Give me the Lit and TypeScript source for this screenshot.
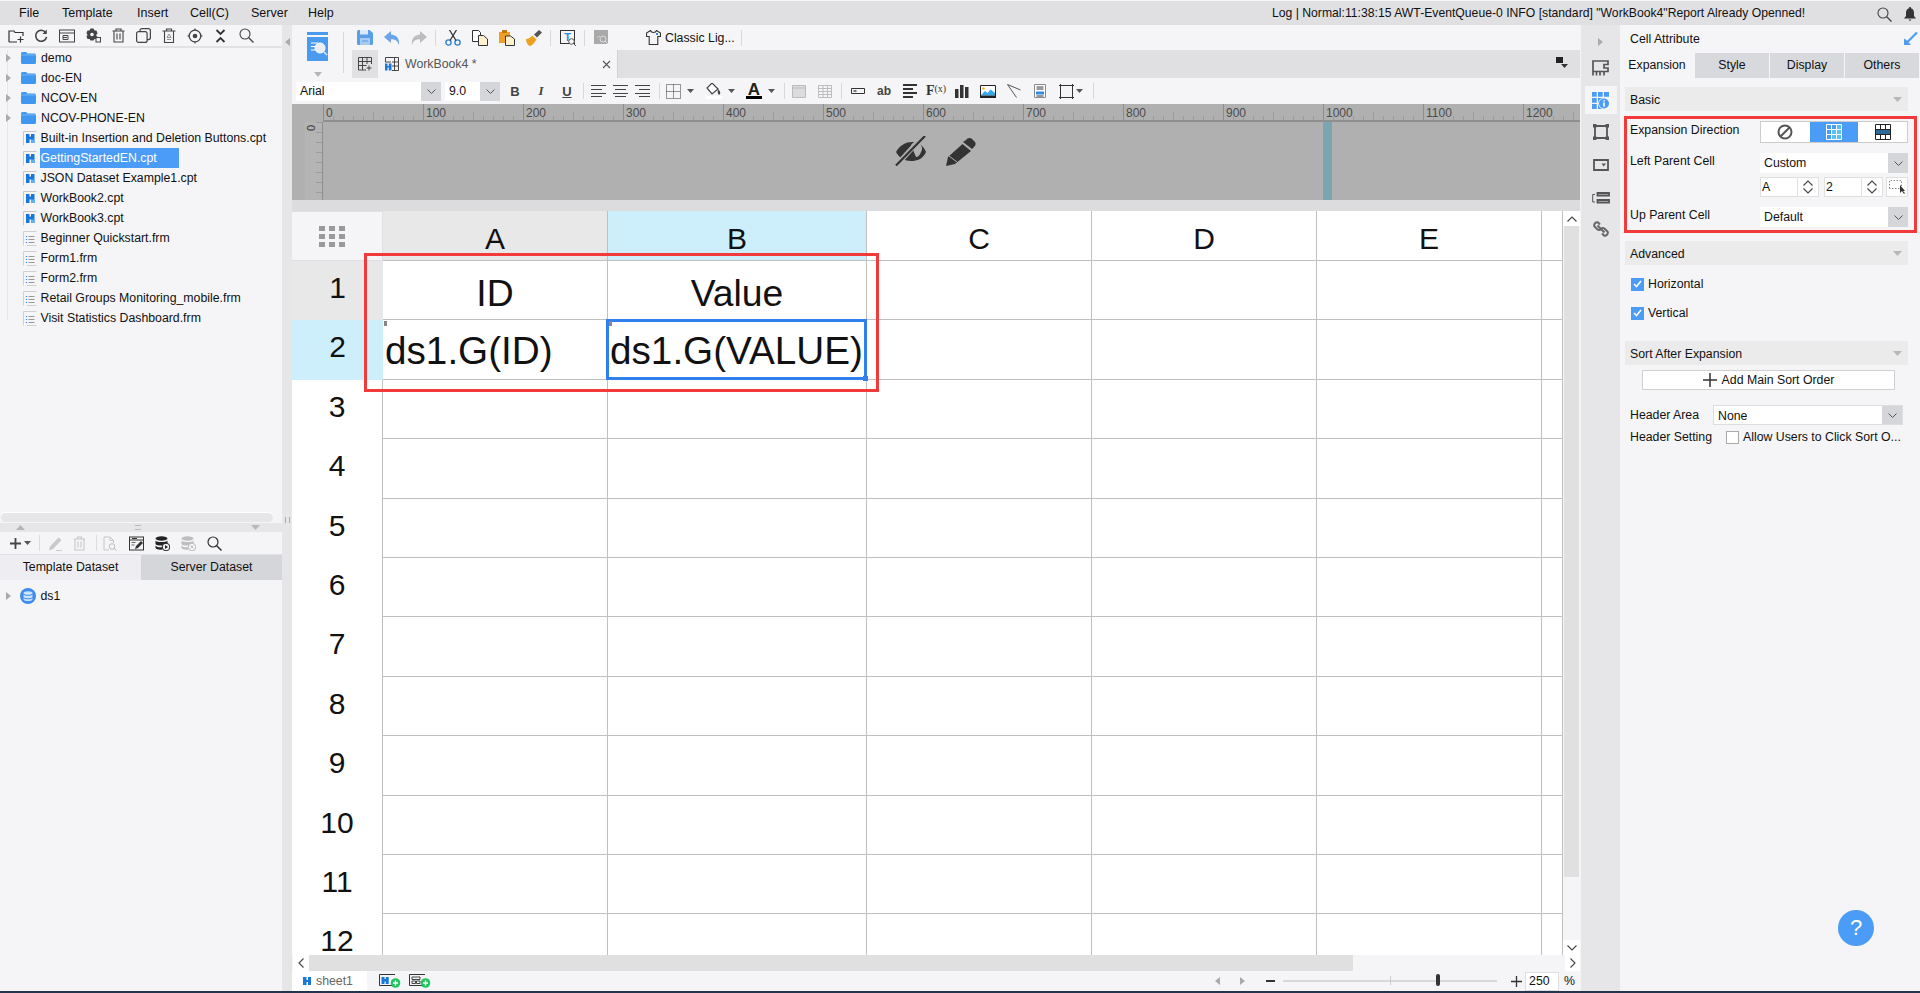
import { LitElement, html, css, svg } from "lit";
import { customElement } from "lit/decorators.js";

const S = (w: number, h: number, body: any) =>
  html`<svg width=${w} height=${h} viewBox="0 0 ${w} ${h}" fill="none" xmlns="http://www.w3.org/2000/svg">${body}</svg>`;

const BL = "#4b9cf7";

const ic: Record<string, any> = {
  newFolder: S(16, 14, svg`<path d="M1 13V2h5l1 1.500h8V7M1 13h8" stroke="#333" stroke-width="1.200"/><path d="M12.500 7.500v6M9.500 10.500h6" stroke="#333" stroke-width="1.200"/>`),
  refresh: S(14, 14, svg`<path d="M11.600 3.400A5.500 5.500 0 1 0 12.600 8" stroke="#444" stroke-width="1.600"/><path d="M12.800 .5v4.500H8.500z" fill="#444"/>`),
  panel: S(16, 14, svg`<rect x=".5" y="1" width="15" height="12" stroke="#444"/><path d="M.5 4h15M4 6.500h5v4H4zM4 8.500h4" stroke="#444"/>`),
  gear: S(16, 15, svg`<path d="M2.500 2.500h2l1-2h3l1 2h2l1 3-1.500 1.500 1.500 2-1 2h-2l-1 1.500h-3l-1-1.500h-2l-1-2.500 1-1.500-1-2z" fill="#444"/><circle cx="7" cy="6.500" r="1.800" fill="#f5f5f7"/><rect x="11" y="9.500" width="4.500" height="4.500" fill="#f5f5f7" stroke="#444"/>`),
  trash: S(13, 15, svg`<path d="M.5 3h12M4 3V1h5v2M2 3v11h9V3M5 5.500v6M8 5.500v6" stroke="#444" stroke-width="1.100"/>`),
  copyBox: S(15, 15, svg`<rect x=".6" y="3.600" width="10.500" height="10.800" rx="2" stroke="#444" stroke-width="1.200"/><path d="M4 3.500V2.600a2 2 0 0 1 2-2h6.400a2 2 0 0 1 2 2v7a2 2 0 0 1-2 2H11" stroke="#444" stroke-width="1.200"/>`),
  recycle: S(14, 15, svg`<path d="M.5 3h13M4.500 3V1h5v2M2.500 3v11.500h9V3" stroke="#444" stroke-width="1.100"/><path d="M7 6 5 9.500h4zM5 11.500h4" stroke="#888" stroke-width=".9"/>`),
  locate: S(16, 16, svg`<circle cx="8" cy="8" r="5.800" stroke="#444" stroke-width="1.300"/><circle cx="8" cy="8" r="2.300" fill="#444"/><path d="M8 .5v2M8 13.500v2M.5 8h2M13.500 8h2" stroke="#444" stroke-width="1.200"/>`),
  collapse: S(11, 14, svg`<path d="M1.500 1 5.500 5 9.500 1M1.500 13 5.500 9 9.500 13" stroke="#333" stroke-width="1.800"/>`),
  search: S(15, 15, svg`<circle cx="6" cy="6" r="5" stroke="#444" stroke-width="1.100"/><path d="M9.700 9.700 14.500 14.500" stroke="#444" stroke-width="1.300"/>`),
  folder: S(15, 12, svg`<path d="M0 1.500Q0 0 1.500 0H5l1.500 1.500h7Q15 1.500 15 3v7.500q0 1.500-1.500 1.500h-12Q0 12 0 10.500z" fill="#3f97f0"/><path d="M0 3h15" stroke="#8cc3f8" stroke-width=".7"/>`),
  cpt: S(14, 15, svg`<path d="M.5 14.500V.5h13" stroke="#c8c8c8" stroke-width="1"/><path d="M3 3h3.500v2.500H8V3h3.500v9H8V8.500H6.500V12H3z" fill="#1878d8"/><path d="M8 8.500h3.500V12H8z" fill="#5ab0f5"/>`),
  frm: S(14, 15, svg`<path d="M.5 14.500V.5h13M4 14.500h9.500" stroke="#d0d0d0"/><path d="M3.500 5v1M3.500 8v1M3.500 11v1" stroke="#2a8de8" stroke-width="1.200"/><path d="M5.500 5.500h6M5.500 8.500h6M5.500 11.500h6" stroke="#999"/>`),
  plus: S(13, 13, svg`<path d="M6.500 1v11M1 6.500h11" stroke="#444" stroke-width="1.800"/>`),
  caret: S(7, 4, svg`<path d="M0 0h7L3.500 4z" fill="#555"/>`),
  pencilG: S(15, 15, svg`<path d="M10.500 1.500l3 2.500L5 13l-4 1.500 1-4z" fill="#c9c9c9"/><path d="M8 14.500h6" stroke="#c9c9c9"/>`),
  trashG: S(13, 15, svg`<path d="M1 3h11M4.500 3V1h4v2M2 3v11h9V3M5 5.500v6M8 5.500v6" stroke="#c6c6c6" stroke-width="1.100"/>`),
  pageG: S(14, 15, svg`<path d="M1 14V1h6l3.500 3.500V7M1 14h5M7 1v3.500h3.500" stroke="#c6c6c6"/><circle cx="9" cy="10.500" r="2.800" stroke="#bbb"/><path d="M11 12.500l2.500 2" stroke="#bbb"/>`),
  dsEdit: S(15, 15, svg`<rect x=".5" y="1" width="14" height="13" stroke="#333"/><path d="M.5 4h14M3 2.500h5" stroke="#333"/><path d="M2.500 6.500h4M2.500 9h3" stroke="#666"/><path d="M6 13l1-3 5-5 2 2-5 5z" fill="#333"/>`),
  dsRun: S(15, 15, svg`<ellipse cx="6.500" cy="2.500" rx="6" ry="2.200" fill="#222"/><path d="M.5 4.500c1 2 11 2 12 0V8c-1 2-11 2-12 0zM.5 9.500c1 2 6 2 7 1.500v2.500c-3 .5-6 0-7-1.500z" fill="#222"/><circle cx="11" cy="11" r="3.800" fill="#f5f5f7" stroke="#222"/><path d="M10 9l3 2-3 2z" fill="#222"/>`),
  dsDel: S(15, 15, svg`<ellipse cx="6.500" cy="2.500" rx="6" ry="2.200" fill="#bdbdbd"/><path d="M.5 4.500c1 2 11 2 12 0V8c-1 2-11 2-12 0zM.5 9.500c1 2 6 2 7 1.500v2.500c-3 .5-6 0-7-1.500z" fill="#bdbdbd"/><circle cx="11" cy="11" r="3.800" fill="#f5f5f7" stroke="#bdbdbd"/><path d="M9.500 9.500l3 3M12.500 9.500l-3 3" stroke="#bdbdbd"/>`),
  searchB: S(15, 15, svg`<circle cx="6" cy="6" r="5" stroke="#333" stroke-width="1.200"/><path d="M9.500 9.500 14.500 14.500" stroke="#333" stroke-width="1.500"/>`),
  ds: S(16, 16, svg`<circle cx="8" cy="8" r="8" fill="#3f8cf0"/><ellipse cx="8" cy="5" rx="4.500" ry="1.800" fill="#cfe3fb"/><path d="M3.500 6.500c1 1.800 8 1.800 9 0V9c-1 1.800-8 1.800-9 0zM3.500 10c1 1.800 8 1.800 9 0v1.500c-1 2-8 2-9 0z" fill="#cfe3fb"/>`),
  logo: S(22, 36, svg`<rect width="21" height="3" y="0" fill="#4a9bee"/><path d="M0 5h21v24H0z" fill="#4a9bee"/><path d="M4 11h7M4 14.500h5M4 18h4" stroke="#fff" stroke-width="1.200"/><circle cx="13" cy="16" r="5" fill="#e9eef5" stroke="#fff"/><path d="M16.500 19.500 20 23" stroke="#dfe7f2" stroke-width="1.500"/>`),
  save: S(16, 15, svg`<path d="M0 1.500Q0 0 1.500 0h11L16 3v10.500Q16 15 14.500 15h-13Q0 15 0 13.500z" fill="#5a9fe6"/><path d="M3 0h8v4.500H3z" fill="#dbe9f8"/><path d="M3 8h10v7H3z" fill="#a7cbf1"/><path d="M5 11h6" stroke="#5a9fe6"/>`),
  undo: S(16, 14, svg`<path d="M7 0 0 6l7 6V8.200c3.500 0 6.500 1 8 5.800 .8-6-2.500-10.200-8-10.500z" fill="#6ba5e7"/>`),
  redo: S(16, 14, svg`<path d="M9 0l7 6-7 6V8.200c-3.500 0-6.500 1-8 5.800-.8-6 2.500-10.200 8-10.500z" fill="#bdbdbd"/>`),
  cut: S(16, 16, svg`<circle cx="3.500" cy="12.500" r="2.600" stroke="#2f7fd8" stroke-width="1.400"/><circle cx="12.500" cy="12.500" r="2.600" stroke="#2f7fd8" stroke-width="1.400"/><path d="M5 10.500 11.500 0M11 10.500 4.500 0" stroke="#333" stroke-width="1.300"/>`),
  copy: S(16, 16, svg`<path d="M.5.5h6l2 2v9H.5z" fill="#fff" stroke="#333"/><path d="M6.500 5.500h5l4 3.500v6.500h-9z" fill="#fff3cf" stroke="#333"/>`),
  paste: S(16, 16, svg`<path d="M0 2h11v11H0z" fill="#f0a020"/><path d="M3 0h5v3H3z" fill="#c07808"/><path d="M6.500 6h5l4 3v6.500h-9z" fill="#fff3cf" stroke="#333"/>`),
  brush: S(16, 16, svg`<path d="M0 9c3 0 5-2 6.500-3.500l4 4C9 12 6 16 4 16c-2 0-4-4-4-7z" fill="#f0a020"/><path d="M8 4.500 13 0l3 2.500-5 5z" fill="#555"/>`),
  tsearch: S(16, 16, svg`<rect x=".5" y=".5" width="14" height="13" stroke="#333"/><text x="7.500" y="11" font-family="Liberation Sans" font-weight="700" font-size="11" fill="#2f8be6" text-anchor="middle">T</text><circle cx="11.500" cy="11.500" r="2.800" fill="#f5f5f7" stroke="#555"/><path d="M13.500 13.500 16 16" stroke="#555"/>`),
  grayBox: S(15, 15, svg`<path d="M0 0h14v14H0z" fill="#a9a9a9"/><circle cx="9" cy="9" r="3" stroke="#ddd"/><path d="M11 11l3 3" stroke="#ddd"/><path d="M3 8l2-2 2 2" stroke="#ccc"/>`),
  shirt: S(15, 15, svg`<path d="M4.500.5 .5 3v3.500h2.700v8h8.600v-8h2.700V3l-4-2.500c-.5 1.500-1.500 2-3 2s-2.500-.5-3-2z" stroke="#333" stroke-width="1.100"/><path d="M10 3h2v2h-2z" fill="#2f8be6"/>`),
  addGrid: S(14, 14, svg`<path d="M8 13H.5V.5h13V7M.5 4.500h13M.5 8.500h8M4.500.5V13M9 .5V7" stroke="#444"/><path d="M11 8.500v5M8.500 11h5" stroke="#444"/>`),
  book: S(14, 14, svg`<path d="M6 .5H.5V5M.5 5H6M6 .5h7.500V13.500H7M9.500.5V13.500M7 5h6.500M7 9h6.500" stroke="#444"/><path d="M0 6.500h2.500V9H3.800V6.500h2.700v7H3.800v-3H2.500v3H0z" fill="#1878d8"/>`),
  close: S(9, 9, svg`<path d="M1 1l7 7M8 1 1 8" stroke="#555" stroke-width="1.100"/>`),
  chev: S(9, 5, svg`<path d="M.5.5 4.500 4.500 8.500.5" stroke="#555"/>`),
  alL: S(15, 12, svg`<path d="M0 .5h15M0 4.500h11M0 8.500h15M0 11.500h11" stroke="#444"/>`),
  alC: S(15, 12, svg`<path d="M0 .5h15M2 4.500h11M0 8.500h15M2 11.500h11" stroke="#444"/>`),
  alR: S(15, 12, svg`<path d="M0 .5h15M4 4.500h11M0 8.500h15M4 11.500h11" stroke="#444"/>`),
  border: S(15, 15, svg`<path d="M.5.5h14v14H.5zM7.500.5v14M.5 7.500h14" stroke="#333" stroke-dasharray="1 1"/>`),
  fill: S(16, 16, svg`<path d="M6 0 1 5l5 6 6-5z" fill="#fff" stroke="#444" stroke-width="1.200"/><path d="M12 6c1.500 2 3 3 2 5s-3 0-2-5z" fill="#444"/><path d="M0 13h16v3H0z" fill="#fff"/>`),
  gridA: S(14, 13, svg`<path d="M0 0h14v13H0z" fill="#dcdcdc"/><path d="M.5.5h13v12H.5zM.5 3h13" stroke="#bbb"/>`),
  gridB: S(14, 13, svg`<path d="M.5.5h13v12H.5zM.5 3.500h13M.5 6.500h13M.5 9.500h13M5 .5v12M9.500.5v12" stroke="#bdbdbd"/>`),
  textCell: S(14, 6, svg`<path d="M.5.5h13v5H.5z" stroke="#333"/><path d="M2.500 3h3" stroke="#333" stroke-width="1.300"/>`),
  alignBars: S(14, 14, svg`<path d="M0 1h14M0 5h10M0 9h14M0 13h10" stroke="#333" stroke-width="2"/>`),
  chart: S(14, 13, svg`<path d="M0 4h3.500v9H0zM5 0h3.500v13H5zM10 2h3.500v11H10z" fill="#333"/>`),
  image: S(16, 13, svg`<path d="M.5.5h15v12H.5z" fill="#fff" stroke="#222"/><path d="M1 10l4-4 2.500 2 3-3.500L15 8v2.500H1z" fill="#35a8ee"/><circle cx="3.500" cy="3.500" r="1.300" fill="#f5b031"/><path d="M0 10.500h16V13H0z" fill="#222"/>`),
  slash: S(14, 14, svg`<path d="M.5.5 13.500 6M.5.5 9.500 13.500" stroke="#555"/>`),
  reportI: S(12, 14, svg`<path d="M.5.5h11v13H.5z" fill="#fff" stroke="#888"/><path d="M2.500 3h7M2.500 5h7" stroke="#333"/><path d="M2 7.500h8v3H2z" fill="#2f8be6"/><path d="M2.500 12h7" stroke="#333"/>`),
  square: S(15, 15, svg`<path d="M1.500 1.500h12v12h-12z" stroke="#333"/><path d="M0 1.500h3M12 1.500h3M0 13.500h3M12 13.500h3M1.500 0v3M13.500 0v3M1.500 12v3M13.500 12v3" stroke="#333"/>`),
  eye: S(32, 30, svg`<path d="M1 16C5 9 11 6 17 6c6 0 11 3 14 10-3 7-9 9-15 9-6 0-12-3-15-9z" fill="#333"/><path d="M16 9a6 6 0 0 1 10 7c-1 3-3 5-5 5z" fill="#b0b0b0"/><path d="M28 0 1 30" stroke="#b0b0b0" stroke-width="5"/><path d="M30 0 1 29.500" stroke="#333" stroke-width="2.200"/>`),
  pencil: S(30, 30, svg`<path d="M20 4a4 4 0 0 1 7 0l2 2a4 4 0 0 1-1 5l-2 2-9-7z" fill="#333"/><path d="M16.500 8 25 15 9 28 0 30l2-9z" fill="#333"/><path d="M3 20l8 6" stroke="#b0b0b0"/>`),
  tabMenu: S(12, 12, svg`<path d="M0 0h7v2H3v4H0z" fill="#222"/><path d="M0 0h7v6H0z" fill="#222"/><path d="M5 7h7L8.500 11z" fill="#333"/>`),
  chevUp: S(10, 6, svg`<path d="M.5 5.500 5 1l4.500 4.500" stroke="#444" stroke-width="1.100"/>`),
  chevDn: S(10, 6, svg`<path d="M.5.5 5 5l4.500-4.500" stroke="#444" stroke-width="1.100"/>`),
  chevL: S(6, 10, svg`<path d="M5.500.5 1 5l4.500 4.500" stroke="#444" stroke-width="1.100"/>`),
  chevR: S(6, 10, svg`<path d="M.5.5 5 5 .5 9.500" stroke="#444" stroke-width="1.100"/>`),
  addRep: S(22, 14, svg`<path d="M16 .5H.5v11h13" stroke="#333"/><path d="M2.500 3h3v2h1.200V3h3v7h-3V7.500H5.500V10h-3z" fill="#1878d8"/><circle cx="16.500" cy="9" r="4.800" fill="#22c55e"/><path d="M16.500 6.500v5M14 9h5" stroke="#fff" stroke-width="1.400"/>`),
  addForm: S(22, 14, svg`<path d="M16 .5H.5v11h13" stroke="#333"/><path d="M3 3h8v2.500H3zM3 7h3.500v2.500H3zM7.500 7H11v2.500H7.500z" stroke="#333" stroke-width=".9"/><circle cx="16.500" cy="9" r="4.800" fill="#22c55e"/><path d="M16.500 6.500v5M14 9h5" stroke="#fff" stroke-width="1.400"/>`),
  sideForm: S(17, 16, svg`<path d="M1 15.500V1h15v3.500h-4v3.500h4v3.500h-4v4M1 11.500h11M4.500 11.500v4M8 11.500v4" stroke="#555" stroke-width="1.700"/>`),
  sideCell: S(17, 17, svg`<path d="M0 0h4.700v4.700H0zM6 0h4.700v4.700H6zM12 0h5v4.700h-5zM0 6h4.700v4.700H0zM6 6h4.700v4.700H6zM0 12h4.700v5H0zM6 12h4.700v5H6z" fill="${BL}"/><circle cx="12" cy="11.500" r="5.800" fill="#f5f5f7"/><circle cx="12" cy="11.500" r="5" fill="${BL}"/><path d="M12 8.200v1.300M12 10.500v4.300" stroke="#fff" stroke-width="1.600"/>`),
  sideRect: S(16, 16, svg`<path d="M2 2h12v12H2z" stroke="#555" stroke-width="1.800"/><path d="M0 0h3.500v3.500H0zM12.500 0H16v3.500h-3.500zM0 12.500h3.500V16H0zM12.500 12.500H16V16h-3.500z" fill="#555"/>`),
  sideDrop: S(16, 12, svg`<path d="M1 1h14v10H1z" stroke="#555" stroke-width="1.800"/><path d="M8.500 4.500h4.500l-2.250 3z" fill="#555"/>`),
  sideStack: S(18, 12, svg`<path d="M5.500 1h11.500v2.500H5.500zM5.500 8h11.500v2.500H5.500z" stroke="#555" stroke-width="1.800"/><path d="M3 2.500H.7v7.500H3" stroke="#555"/>`),
  link: S(16, 16, svg`<path d="M7 3.500 5 1.500a3 3 0 0 0-3.700 3.700l3 3a3 3 0 0 0 3.700 0M9 12.500l2 2a3 3 0 0 0 3.700-3.700l-3-3a3 3 0 0 0-3.700 0" stroke="#666" stroke-width="2"/><path d="M4.500 4.500 11.500 11.500" stroke="#666" stroke-width="2"/>`),
  arrowBL: S(14, 13, svg`<path d="M13 .5 3 10.500" stroke="${BL}" stroke-width="2.200"/><path d="M0 6.500V13h7l-2-2-3 .5.500-3z" fill="${BL}"/><path d="M1 7v5h5z" fill="${BL}"/>`),
  ban: S(16, 16, svg`<circle cx="8" cy="8" r="6.500" stroke="#555" stroke-width="2"/><path d="M3.500 12.500 12.500 3.500" stroke="#555" stroke-width="2"/>`),
  gridSel: S(16, 16, svg`<path d="M.5.5h15v15H.5zM5.500.5v15M10.500.5v15M.5 5.500h15M.5 10.500h15" stroke="#fff"/><path d="M6 6h4v4H6zM11 1h4v4h-4zM11 6h4v4h-4zM11 11h4v4h-4zM6 11h4v4H6z" fill="#56c3f5"/>`),
  gridDark: S(16, 16, svg`<path d="M.5.5h15v15H.5zM5.500.5v15M10.500.5v15M.5 5.500h15M.5 10.500h15" stroke="#222"/><path d="M1 6h14v4H1z" fill="#2a6a98"/>`),
  picker: S(17, 15, svg`<path d="M.5 8.500V.5h12v8z" stroke="#888" stroke-dasharray="1.500 1.500"/><path d="M11 5v8l2-2 2 3 1-1-2-2h2z" fill="#333"/>`),
  check: S(9, 8, svg`<path d="M1 4l2.500 2.500L8 1" stroke="#fff" stroke-width="1.600"/>`),
  plusBig: S(14, 14, svg`<path d="M7 0v14M0 7h14" stroke="#333" stroke-width="1.500"/>`),
  triL: S(5, 8, svg`<path d="M5 0v8L0 4z" fill="#aaa"/>`),
  triR: S(5, 8, svg`<path d="M0 0v8l5-4z" fill="#aaa"/>`),
  triDn: S(9, 5, svg`<path d="M0 0h9L4.500 5z" fill="#b8b8b8"/>`),
};

const files = [
  ["cpt", "Built-in Insertion and Deletion Buttons.cpt"],
  ["cpt", "GettingStartedEN.cpt"],
  ["cpt", "JSON Dataset Example1.cpt"],
  ["cpt", "WorkBook2.cpt"],
  ["cpt", "WorkBook3.cpt"],
  ["frm", "Beginner Quickstart.frm"],
  ["frm", "Form1.frm"],
  ["frm", "Form2.frm"],
  ["frm", "Retail Groups Monitoring_mobile.frm"],
  ["frm", "Visit Statistics Dashboard.frm"],
];
const folders = ["demo", "doc-EN", "NCOV-EN", "NCOV-PHONE-EN"];
const rulerLabels = Array.from({ length: 13 }, (_, i) => i * 100);
const rows = Array.from({ length: 12 }, (_, i) => i + 1);
const cols = ["A", "B", "C", "D", "E"];

@customElement("app-root")
export class AppRoot extends LitElement {
  static styles = css`
    :host { display: block; width: 1920px; height: 993px; overflow: hidden; font-family: "Liberation Sans", Arial, sans-serif; font-size: 12px; color: #111; }
    .root { position: relative; display: flex; flex-direction: column; height: 993px; background: #f5f5f7; }
    svg { display: block; flex: none; }

    .menubar { height: 24px; flex: none; margin-top: 1px; background: #e0e0e3; display: flex; align-items: center; padding-left: 19px; position: relative; }
    .menu { font-size: 12.500px; }
    .m1 { width: 43px; } .m2 { width: 75px; } .m3 { width: 53px; } .m4 { width: 61px; } .m5 { width: 57px; }
    .log { position: absolute; left: 1272px; top: 5px; font-size: 12.200px; white-space: nowrap; }
    .mbi { position: absolute; top: 6px; }
    .mbi.a { left: 1877px; } .mbi.b { left: 1904px; }

    .body { flex: 1; display: flex; min-height: 0; }
    .left { width: 282px; flex: none; display: flex; flex-direction: column; position: relative; }
    .gut { width: 10px; flex: none; background: #e6e6e8; display: flex; flex-direction: column; align-items: center; }
    .gut .t1 { margin-top: 13px; }
    .gut .grip { margin-top: 471px; width: 3px; height: 6px; border-left: 1px solid #aaa; border-right: 1px solid #aaa; }
    .ltool { height: 21px; flex: none; display: flex; align-items: center; padding-left: 3px; border-bottom: 2px solid #e2e2e4; }
    .ls { width: 25.600px; display: flex; justify-content: center; flex: none; }
    .tree { height: 465px; flex: none; position: relative; }
    .conn { position: absolute; left: 7px; top: 2px; height: 270px; width: 1px; background: #e6e6e8; }
    .trow { height: 20px; display: flex; align-items: center; position: relative; white-space: nowrap; font-size: 12.300px; }
    .trow .arrow { width: 21px; padding-left: 6px; box-sizing: border-box; }
    .trow .fold { width: 19px; }
    .trow .fi { margin-left: 23px; width: 16.500px; }
    .trow .lbl { padding: 0 1px; height: 20px; line-height: 20px; }
    .trow .lbl.sel { background: #4b9cf7; color: #fff; padding: 0 22px 0 1px; }
    .hs { height: 9px; flex: none; margin: 0 9px 0 1px; background: #e6e6e8; border-radius: 5px; box-shadow: 0 -1px 0 #fff; }
    .split { height: 9px; flex: none; margin-top: 1px; background: #e6e6e8; position: relative; display: flex; justify-content: space-between; align-items: center; padding: 0 22px 0 16px; }
    .split .bars { width: 6px; height: 3px; border-top: 1px solid #bbb; border-bottom: 1px solid #bbb; }
    .dtool { height: 22px; flex: none; display: flex; align-items: center; padding-left: 9px; border-bottom: 1px solid #e2e2e4; }
    .dtool .add { display: flex; align-items: center; gap: 2px; width: 28px; }
    .dtool .vs { width: 1px; height: 16px; background: #ddd; margin: 0 8px 0 2px; }
    .dtool .vs.b { margin: 0 0 0 -2px; }
    .dtool .sl { width: 26px; display: flex; justify-content: center; }
    .dtool .sl.n { width: 25px; justify-content: flex-start; }
    .dtabs { height: 25px; flex: none; display: flex; }
    .dtab { width: 141px; line-height: 25px; text-align: center; font-size: 12.300px; background: #eeeef2; }
    .dtab.off { background: #d5d6da; }
    .dsrow { margin-top: 6px; height: 20px; display: flex; align-items: center; font-size: 12.300px; }
    .dsrow .arrow { padding-left: 6px; width: 20px; box-sizing: border-box; }
    .dsrow .dsi { width: 20.500px; }

    .center { flex: 1; min-width: 0; display: flex; flex-direction: column; position: relative; }
    .head { display: flex; height: 53px; flex: none; }
    .logo { width: 51px; flex: none; box-sizing: border-box; padding: 7px 0 0 15px; position: relative; }
    .logo .down { margin: 4px 0 0 7px; }
    .logo::after { content: ""; position: absolute; left: 51px; top: 7px; height: 41px; width: 1px; background: #d8d8da; }
    .headr { flex: 1; min-width: 0; display: flex; flex-direction: column; }
    .tool { height: 25px; display: flex; align-items: center; padding-left: 8px; }
    .sl27 { width: 27px; display: flex; justify-content: center; }
    .vsep { width: 1px; height: 16px; background: #d8d8da; margin: 0 3px; flex: none; }
    .classic { display: flex; align-items: center; gap: 4px; margin-left: 31px; font-size: 12.300px; width: 92px; }
    .tabs { flex: 1; margin-left: 9px; background: #e0e0e3; display: flex; position: relative; align-items: stretch; }
    .tadd { width: 26px; display: flex; align-items: center; justify-content: center; border-right: 1px solid #f5f5f7; background: #e0e0e3; }
    .tab { width: 239px; background: #f5f5f7; display: flex; align-items: center; padding: 0 6px; box-sizing: border-box; color: #555; font-size: 12.300px; gap: 6px; border-right: 1px solid #d0d0d0; }
    .tab .c { margin-left: auto; margin-right: 0; }
    .tabs .tm { position: absolute; right: 12px; top: 7px; }

    .fmt { height: 26px; flex: none; display: flex; align-items: center; padding-left: 4px; }
    .sel { display: flex; height: 19px; background: #fff; align-items: stretch; box-sizing: border-box; font-size: 12.300px; }
    .sel .v { flex: 1; padding-left: 4px; line-height: 19px; }
    .sel .b { width: 20px; background: #d5d6da; display: flex; align-items: center; justify-content: center; flex: none; }
    .sel.f { width: 145px; }
    .sel.s { width: 55px; margin-left: 4px; margin-right: 2px; }
    .sl26 { width: 26px; display: flex; justify-content: center; flex: none; font-size: 14px; color: #444; }
    .sl22 { width: 22px; display: flex; justify-content: center; flex: none; }
    .sl40 { width: 40px; display: flex; align-items: center; gap: 6px; padding-left: 3px; box-sizing: border-box; flex: none; }
    .sl39 { width: 39px; display: flex; align-items: center; gap: 2px; padding-left: 6px; box-sizing: border-box; flex: none; }
    .fb { font-weight: 700; font-size: 13px; }
    .fi2 { font-style: italic; font-weight: 700; font-size: 13px; font-family: "Liberation Serif", serif; }
    .fu { text-decoration: underline; font-weight: 700; font-size: 13px; }
    .vsep.f6 { margin: 0 3px 0 6px; }
    .vsep.f0 { margin: 0 1px 0 1px; }
    .ca { font-size: 17px; font-weight: 700; line-height: 13px; color: #222; border-bottom: 3px solid #000; width: 16px; text-align: center; height: 13px; }
    .ab { font-size: 12px; font-weight: 700; color: #444; }
    .fx { font-family: "Liberation Serif", serif; font-size: 14px; font-weight: 700; color: #333; white-space: nowrap; }
    .fx small { font-size: 10px; font-weight: 400; }

    .paper { height: 96px; flex: none; background: #b0b0b0; position: relative; overflow: hidden; }
    .ruler { position: absolute; left: 31px; right: 0; top: 0; height: 16px; border-bottom: 2px solid #8f8f8f;
      background-image: linear-gradient(90deg, #8f8f8f 1px, transparent 1px), linear-gradient(90deg, #9c9c9c 1px, transparent 1px), linear-gradient(90deg, #9c9c9c 1px, transparent 1px);
      background-size: 100px 16px, 100px 8px, 10px 4px; background-position: 0 0, 50px 100%, 0 100%; background-repeat: repeat-x; }
    .rl { position: absolute; top: 3px; font-size: 12px; color: #4c4c4c; line-height: 13px; }
    .vruler { position: absolute; left: 13px; top: 18px; bottom: 0; width: 17px; background-color: #b4b4b4; border-right: 1px solid #8f8f8f;
      background-image: linear-gradient(#9c9c9c 1px, transparent 1px); background-size: 6px 10px; background-position: 100% 0; background-repeat: repeat-y; }
    .v0 { position: absolute; left: 16px; top: 18px; font-size: 11px; transform: rotate(-90deg); color: #333; line-height: 12px; }
    .teal { position: absolute; left: 1031px; width: 9px; top: 18px; bottom: 0; background: #7ba5b0; }
    .pi { position: absolute; top: 32px; }
    .pi.e { left: 603px; } .pi.p { left: 654px; }

    .gap { height: 11px; flex: none; background: #dcdcde; }
    .sheet { flex: 1; min-height: 0; display: flex; }
    .gridw { flex: 1; min-width: 0; overflow: hidden; background: #fff; position: relative; }
    .grid { display: grid; grid-template-columns: 91px 225px 259px 225px 225px 225px 21px; grid-template-rows: 50px repeat(12, 59.400px); }
    .cell { box-sizing: border-box; border-right: 1px solid #c0c0c0; border-bottom: 1px solid #c0c0c0; background: #fff; }
    .cell.big { font-size: 37.300px; line-height: 52px; white-space: nowrap; overflow: visible; }
    .cell.ctr { text-align: center; padding-top: 6px; }
    .cell.lf { padding: 5px 0 0 2px; font-size: 38.700px; }
    .ch { font-size: 30px; text-align: center; line-height: 55px; height: 50px; overflow: hidden; }
    .ch.a { background: #e8e8e8; }
    .ch.s { background: #cdeefb; }
    .corner { background: #f5f5f7; border: 1px solid #e0e0e2; border-left: none; display: flex; align-items: center; justify-content: center; padding-right: 11px; }
    .dots { display: grid; grid-template-columns: repeat(3, 6px); gap: 3px 4px; }
    .dots i { width: 6px; height: 5px; background: #9a9a9a; }
    .rh { font-size: 30px; text-align: center; line-height: 54px; border-bottom: none; border-right: none; }
    .rh.a { background: #e8e8e8; }
    .rh.s { background: #cdeefb; }
    .rh.w { background: #fff; border-right: 1px solid #c0c0c0; }
    .selbox { position: absolute; left: 314px; top: 108px; width: 261px; height: 61px; box-sizing: border-box; border: 3px solid #2f80ed; }
    .selbox::after { content: ""; position: absolute; right: -4px; bottom: -4px; width: 5px; height: 5px; background: #2f80ed; }
    .mk { position: absolute; width: 3px; height: 5px; background: #888; top: 110px; }
    .mk.a { left: 92px; } .mk.b { left: 317px; }
    .vs2 { width: 17px; flex: none; display: flex; flex-direction: column; }
    .sbtn { height: 15px; background: #fff; display: flex; align-items: center; justify-content: center; flex: none; }
    .vthumb { height: 651px; margin: 0 1px; background: #e0e0e0; flex: none; }
    .vtrack { flex: 1; }
    .hsb { height: 16px; flex: none; display: flex; background: #f5f5f7; }
    .hbtn { width: 16px; background: #fff; display: flex; align-items: center; justify-content: center; margin-left: 1px; }
    .hthumb { width: 1044px; background: #e0e0e0; }
    .hbtn.r { margin-left: auto; width: 15px; }
    .status { height: 20px; flex: none; display: flex; align-items: center; position: relative; }
    .stab { width: 75px; align-self: stretch; background: #fff; display: flex; align-items: center; gap: 5px; padding-left: 11px; box-sizing: border-box; color: #666; font-size: 12.300px; }
    .sadd { margin-left: 12px; display: flex; gap: 8px; }
    .zoom { margin-left: auto; display: flex; align-items: center; margin-right: 5px; }
    .zoom .tl { margin-right: 20px; }
    .zoom .mn { width: 9px; height: 1.500px; background: #333; margin: 0 3px 0 1px; }
    .slider { width: 214px; height: 1.500px; background: #d8d8d8; margin: 0 14px 0 5px; position: relative; }
    .slider .tk { position: absolute; left: 107px; top: -4px; width: 1px; height: 9px; background: #ccc; }
    .slider .th { position: absolute; left: 153px; top: -6px; width: 4px; height: 12px; border-radius: 2px; background: #333; }
    .pct { width: 34px; height: 19px; background: #fff; border: 1px solid #ddd; box-sizing: border-box; margin-left: 3px; line-height: 17px; padding-left: 3px; font-size: 12.300px; }
    .pc { margin-left: 5px; font-size: 12.300px; }

    .iconcol { width: 40px; flex: none; background: #e6e6e8; border-left: 1px solid #f5f5f7; box-sizing: border-box; display: flex; flex-direction: column; align-items: center; }
    .iconcol .t { margin-top: 13px; height: 8px; }
    .ibox { width: 32px; display: flex; align-items: center; justify-content: center; }
    .ibox.i1 { height: 16px; margin-top: 14px; }
    .ibox.i2 { height: 28px; margin-top: 10px; background: #f5f5f7; }
    .ibox.i3 { height: 16px; margin-top: 10px; }
    .ibox.i4 { height: 13px; margin-top: 18px; }
    .ibox.i5 { height: 13px; margin-top: 20px; }
    .ibox.i6 { height: 16px; margin-top: 17px; }

    .right { width: 300px; flex: none; font-size: 12.300px; display: flex; flex-direction: column; position: relative; }
    .rhead { height: 27px; flex: none; display: flex; align-items: center; justify-content: space-between; padding: 0 2px 0 10px; }
    .rtabs { height: 25px; flex: none; margin-top: 1px; display: flex; gap: 1px; }
    .rtab { width: 74px; line-height: 25px; text-align: center; background: #d8d9dd; }
    .rtab.on { background: #f5f5f7; }
    .sect { height: 24px; flex: none; margin: 0 12px 0 5px; background: #ebebeb; display: flex; align-items: center; justify-content: space-between; padding: 0 6px 0 5px; }
    .sect span { padding-top: 2px; }
    .s1 { margin-top: 9px; }
    .frow { display: flex; padding-left: 10px; }
    .frow .fl { width: 130px; flex: none; }
    .seg { width: 148px; height: 22px; background: #fff; border: 1px solid #ccc; box-sizing: border-box; display: flex; }
    .seg span { flex: 1; display: flex; align-items: center; justify-content: center; }
    .seg .on { background: #4b9cf7; }
    .exp { margin-top: 10px; } .exp .fl { line-height: 18px; }
    .lp { margin-top: 10px; } .lp .fl { line-height: 16px; }
    .rsel { width: 148px; height: 20px; display: flex; background: #fff; }
    .rsel .v { flex: 1; padding-left: 4px; line-height: 20px; }
    .rsel .b { width: 20px; background: #d5d6da; display: flex; align-items: center; justify-content: center; }
    .spins { margin: 4px 0 0 140px; display: flex; height: 20px; width: 148px; }
    .spin { display: flex; width: 59px; background: #fff; margin-right: 5px; border: 1px solid #e0e0e0; box-sizing: border-box; }
    .spin .v { flex: 1; padding-left: 1px; line-height: 18px; }
    .spin .ar { width: 21px; border-left: 1px solid #e0e0e0; display: flex; flex-direction: column; align-items: center; justify-content: space-around; padding: 1px 0; box-sizing: border-box; }
    .pick { flex: 1; background: #fff; border: 1px solid #e0e0e0; box-sizing: border-box; display: flex; align-items: center; justify-content: center; margin-left: -2px; }
    .s2 { margin-top: 14px; }
    .ck { display: flex; align-items: center; padding-left: 11px; gap: 4px; height: 16px; }
    .ck1 { margin-top: 11px; } .ck2 { margin-top: 13px; }
    .box { width: 13px; height: 13px; background: #4b9cf7; display: flex; align-items: center; justify-content: center; flex: none; }
    .box.off { background: #fff; border: 1px solid #aaa; box-sizing: border-box; }
    .s3 { margin-top: 20px; }
    .addb { height: 20px; margin: 5px 25px 0 22px; background: #fff; border: 1px solid #d0d0d0; box-sizing: border-box; display: flex; align-items: center; justify-content: center; gap: 5px; }
    .ha { display: flex; padding-left: 10px; align-items: center; margin-top: 15px; height: 20px; }
    .ha .fl { width: 83px; }
    .ha .rsel { width: 190px; box-sizing: border-box; border: 1px solid #ddd; }
    .hs2 { display: flex; padding-left: 10px; align-items: center; margin-top: 2px; height: 20px; }
    .hs2 .fl { width: 96px; flex: none; }
    .hs2 .tx { margin-left: 4px; white-space: nowrap; }
    .help { position: absolute; left: 218px; top: 885px; width: 36px; height: 36px; border-radius: 50%; background: #4b9cf7; color: #fff; font-size: 22px; text-align: center; line-height: 36px; }
    .bottom { height: 2px; flex: none; background: #24344d; }
    .red { position: absolute; box-sizing: border-box; border: 3px solid #f33a3a; pointer-events: none; }
    .red.r1 { left: 364px; top: 253px; width: 515px; height: 139px; }
    .red.r2 { left: 1624px; top: 116px; width: 293px; height: 117px; }
  `;

  private tree() {
    return html`<div class="tree"><div class="conn"></div>
      ${folders.map((f) => html`<div class="trow"><span class="arrow">${ic.triR}</span><span class="fold">${ic.folder}</span><span class="lbl">${f}</span></div>`)}
      ${files.map(([k, f]) => html`<div class="trow"><span class="fi">${ic[k]}</span><span class="lbl ${f.startsWith("Getting") ? "sel" : ""}">${f}</span></div>`)}
    </div>`;
  }

  private cells() {
    const content: Record<string, any> = {
      "1A": html`<div class="cell big ctr">ID</div>`,
      "1B": html`<div class="cell big ctr">Value</div>`,
      "2A": html`<div class="cell big lf">ds1.G(ID)</div>`,
      "2B": html`<div class="cell big lf">ds1.G(VALUE)</div>`,
    };
    return html`
      <div class="cell corner"><div class="dots">${Array.from({ length: 9 }, () => html`<i></i>`)}</div></div>
      ${cols.map((c) => html`<div class="cell ch ${c === "A" ? "a" : c === "B" ? "s" : ""}">${c}</div>`)}
      <div class="cell ch"></div>
      ${rows.map(
        (r) => html`<div class="cell rh ${r === 1 ? "a" : r === 2 ? "s" : "w"}">${r}</div>
          ${cols.map((c) => content[`${r}${c}`] ?? html`<div class="cell"></div>`)}
          <div class="cell"></div>`
      )}`;
  }

  render() {
    const ltools = ["newFolder", "refresh", "panel", "gear", "trash", "copyBox", "recycle", "locate", "collapse", "search"];
    return html`<div class="root">
      <div class="menubar">
        <span class="menu m1">File</span><span class="menu m2">Template</span><span class="menu m3">Insert</span><span class="menu m4">Cell(C)</span><span class="menu m5">Server</span><span class="menu">Help</span>
        <span class="log">Log | Normal:11:38:15 AWT-EventQueue-0 INFO [standard] "WorkBook4"Report Already Openned!</span>
        <span class="mbi a">${ic.search}</span>
        <span class="mbi b">${S(12, 14, svg`<path d="M6 0a1 1 0 0 1 1 1.200C9.500 2 10 4 10 6v3l2 2.500H0L2 9V6c0-2 .5-4 3-4.800A1 1 0 0 1 6 0zM4.500 12.500h3L6 14z" fill="#333"/>`)}</span>
      </div>

      <div class="body">
        <div class="left">
          <div class="ltool">${ltools.map((k) => html`<span class="ls">${ic[k]}</span>`)}</div>
          ${this.tree()}
          <div class="hs"></div>
          <div class="split">${S(9, 5, svg`<path d="M0 5h9L4.500 0z" fill="#b5b5b5"/>`)}<span class="bars"></span>${ic.triDn}</div>
          <div class="dtool">
            <span class="add">${ic.plus}${ic.caret}</span><span class="vs"></span>
            <span class="sl n">${ic.pencilG}</span><span class="sl n">${ic.trashG}</span><span class="vs b"></span>
            <span class="sl">${ic.pageG}</span><span class="sl">${ic.dsEdit}</span><span class="sl">${ic.dsRun}</span><span class="sl">${ic.dsDel}</span><span class="sl">${ic.searchB}</span>
          </div>
          <div class="dtabs"><div class="dtab">Template Dataset</div><div class="dtab off">Server Dataset</div></div>
          <div class="dsrow"><span class="arrow">${ic.triR}</span><span class="dsi">${ic.ds}</span><span>ds1</span></div>
        </div>
        <div class="gut"><span class="t1">${ic.triL}</span><span class="grip"></span></div>

        <div class="center">
          <div class="head">
            <div class="logo">${ic.logo}<div class="down">${S(8, 5, svg`<path d="M0 0h8L4 5z" fill="#b5b5b5"/>`)}</div></div>
            <div class="headr">
              <div class="tool">
                <span class="sl27">${ic.save}</span><span class="sl27">${ic.undo}</span><span class="sl27">${ic.redo}</span><span class="vsep"></span>
                <span class="sl27">${ic.cut}</span><span class="sl27">${ic.copy}</span><span class="sl27">${ic.paste}</span><span class="sl27">${ic.brush}</span><span class="vsep"></span>
                <span class="sl27">${ic.tsearch}</span><span class="vsep"></span>
                <span class="sl27">${ic.grayBox}</span>
                <span class="classic">${ic.shirt}Classic Lig...</span><span class="vsep"></span>
              </div>
              <div class="tabs">
                <span class="tadd">${ic.addGrid}</span>
                <span class="tab">${ic.book}WorkBook4 *<span class="c">${ic.close}</span></span>
                <span class="tm">${ic.tabMenu}</span>
              </div>
            </div>
          </div>

          <div class="fmt">
            <div class="sel f"><span class="v">Arial</span><span class="b">${ic.chev}</span></div>
            <div class="sel s"><span class="v">9.0</span><span class="b">${ic.chev}</span></div>
            <span class="sl26 fb">B</span><span class="sl26 fi2">I</span><span class="sl26 fu">U</span><span class="vsep"></span>
            <span class="sl22">${ic.alL}</span><span class="sl22">${ic.alC}</span><span class="sl22">${ic.alR}</span><span class="vsep f6"></span>
            <span class="sl40">${ic.border}${ic.caret}</span><span class="sl40">${ic.fill}${ic.caret}</span><span class="sl40"><span class="ca">A</span>${ic.caret}</span><span class="vsep f0"></span>
            <span class="sl26">${ic.gridA}</span><span class="sl26">${ic.gridB}</span><span class="vsep"></span>
            <span class="sl26">${ic.textCell}</span><span class="sl26 ab">ab</span><span class="sl26">${ic.alignBars}</span><span class="sl26 fx">F<small>(x)</small></span><span class="sl26">${ic.chart}</span><span class="sl26">${ic.image}</span><span class="sl26">${ic.slash}</span><span class="sl26">${ic.reportI}</span>
            <span class="sl39">${ic.square}${ic.caret}</span><span class="vsep f0"></span>
          </div>

          <div class="paper">
            <div class="teal"></div>
            <div class="ruler">${rulerLabels.map((n) => html`<span class="rl" style="left:${n + 3}px">${n}</span>`)}</div>
            <div class="vruler"></div><span class="v0">0</span>
            <span class="pi e">${ic.eye}</span><span class="pi p">${ic.pencil}</span>
          </div>
          <div class="gap"></div>

          <div class="sheet">
            <div class="gridw">
              <div class="grid">${this.cells()}</div>
              <div class="selbox"></div><span class="mk a"></span><span class="mk b"></span>
            </div>
            <div class="vs2"><span class="sbtn">${ic.chevUp}</span><span class="vthumb"></span><span class="vtrack"></span><span class="sbtn">${ic.chevDn}</span></div>
          </div>
          <div class="hsb"><span class="hbtn">${ic.chevL}</span><span class="hthumb"></span><span class="hbtn r">${ic.chevR}</span></div>
          <div class="status">
            <div class="stab">${S(8, 8, svg`<path d="M0 0h3.500v3H5V0h3v8H5V5H3.500v3H0z" fill="#1878d8"/>`)}sheet1</div>
            <div class="sadd">${ic.addRep}${ic.addForm}</div>
            <div class="zoom">
              <span class="tl">${ic.triL}</span><span class="tl">${ic.triR}</span>
              <span class="mn"></span><div class="slider"><i class="tk"></i><i class="th"></i></div>
              ${S(11, 11, svg`<path d="M5.500 0v11M0 5.500h11" stroke="#333" stroke-width="1.300"/>`)}
              <span class="pct">250</span><span class="pc">%</span>
            </div>
          </div>
        </div>

        <div class="iconcol">
          <span class="t">${ic.triR}</span>
          <span class="ibox i1">${ic.sideForm}</span>
          <span class="ibox i2">${ic.sideCell}</span>
          <span class="ibox i3">${ic.sideRect}</span>
          <span class="ibox i4">${ic.sideDrop}</span>
          <span class="ibox i5">${ic.sideStack}</span>
          <span class="ibox i6">${ic.link}</span>
        </div>

        <div class="right">
          <div class="rhead"><span>Cell Attribute</span>${ic.arrowBL}</div>
          <div class="rtabs"><div class="rtab on">Expansion</div><div class="rtab">Style</div><div class="rtab">Display</div><div class="rtab">Others</div></div>
          <div class="sect s1"><span>Basic</span>${ic.triDn}</div>
          <div class="frow exp"><span class="fl">Expansion Direction</span><div class="seg"><span>${ic.ban}</span><span class="on">${ic.gridSel}</span><span>${ic.gridDark}</span></div></div>
          <div class="frow lp"><span class="fl">Left Parent Cell</span><div class="rsel"><span class="v">Custom</span><span class="b">${ic.chev}</span></div></div>
          <div class="spins">
            <div class="spin"><span class="v">A</span><span class="ar">${ic.chevUp}${ic.chevDn}</span></div>
            <div class="spin"><span class="v">2</span><span class="ar">${ic.chevUp}${ic.chevDn}</span></div>
            <div class="pick">${ic.picker}</div>
          </div>
          <div class="frow lp"><span class="fl">Up Parent Cell</span><div class="rsel"><span class="v">Default</span><span class="b">${ic.chev}</span></div></div>
          <div class="sect s2"><span>Advanced</span>${ic.triDn}</div>
          <div class="ck ck1"><span class="box">${ic.check}</span>Horizontal</div>
          <div class="ck ck2"><span class="box">${ic.check}</span>Vertical</div>
          <div class="sect s3"><span>Sort After Expansion</span>${ic.triDn}</div>
          <div class="addb">${ic.plusBig}Add Main Sort Order</div>
          <div class="ha"><span class="fl">Header Area</span><div class="rsel"><span class="v">None</span><span class="b">${ic.chev}</span></div></div>
          <div class="hs2"><span class="fl">Header Setting</span><span class="box off"></span><span class="tx">Allow Users to Click Sort O...</span></div>
          <div class="help">?</div>
        </div>
      </div>
      <div class="bottom"></div>
      <div class="red r1"></div><div class="red r2"></div>
    </div>`;
  }
}
